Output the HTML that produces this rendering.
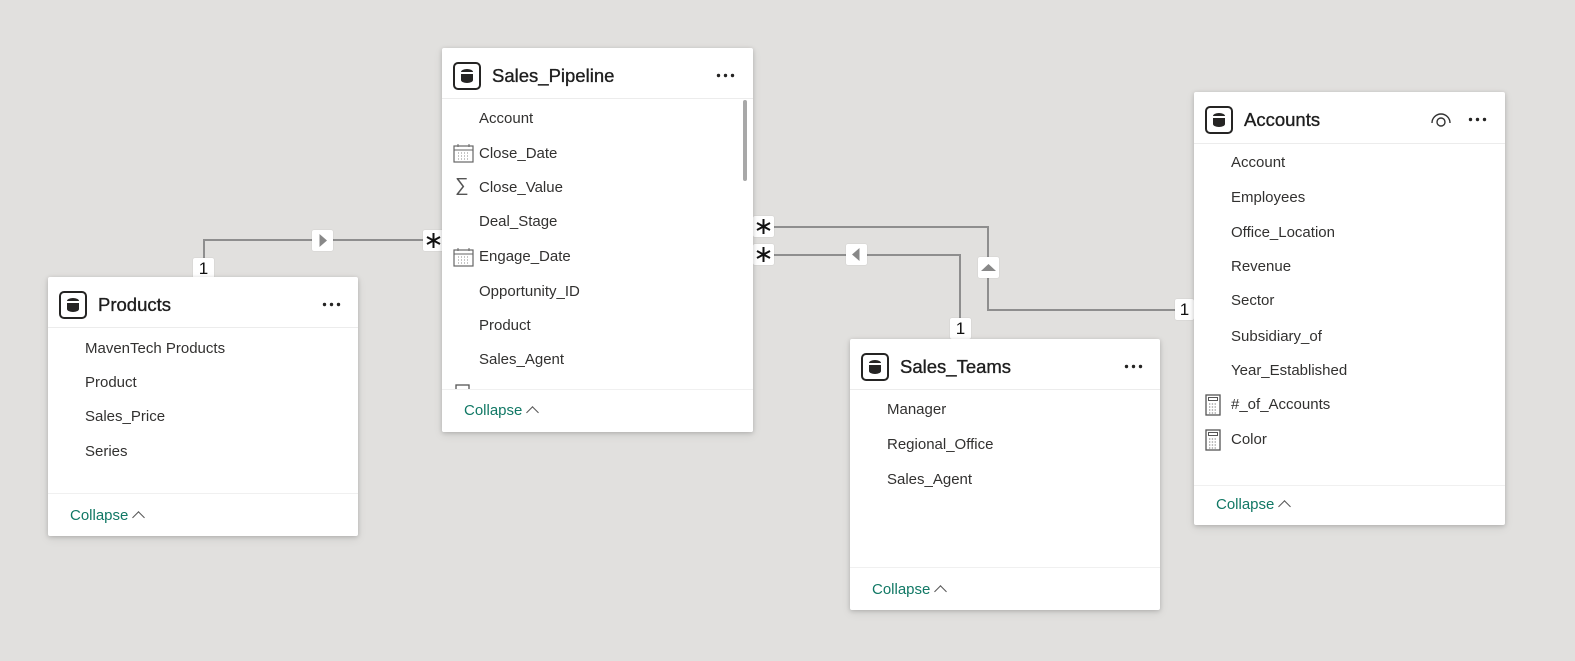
<!DOCTYPE html>
<html><head><meta charset="utf-8"><style>
*{margin:0;padding:0;box-sizing:border-box}
body{width:1575px;height:661px;background:#e1e0de;position:relative;overflow:hidden;font-family:"Segoe UI","Liberation Sans","DejaVu Sans",sans-serif;color:#252423}
.card{position:absolute;background:#fff;border-radius:2px;box-shadow:0 1px 4px rgba(0,0,0,.18),0 3px 10px rgba(0,0,0,.08)}
.hdr{position:absolute;left:0;right:0;top:0;border-bottom:1px solid #ececec}
.ti{position:absolute;left:11px;top:14px;width:28px;height:28px;border:2px solid #252423;border-radius:5px}
.ti:before{content:"";position:absolute;left:6px;top:5px;width:12px;height:14px;background:#252423;border-radius:6px/3px}
.ti:after{content:"";position:absolute;left:6px;top:8px;width:12px;height:1.5px;background:#fff}
.tt{position:absolute;left:50px;top:15px;font-size:18.5px;font-weight:normal;line-height:26px;color:#1e1e1e;-webkit-text-stroke:0.35px #1e1e1e}
.dots{position:absolute;top:25px}
.it{position:absolute;left:37px;font-size:15px;line-height:20px;color:#323130}
.ft{position:absolute;left:0;right:0;border-top:1px solid #f0f0f0}
.col{position:absolute;left:22px;font-size:15px;line-height:20px;color:#117865}
.col span{display:inline-block;width:9px;height:9px;border-left:1.3px solid #555;border-top:1.3px solid #555;transform:rotate(45deg);margin-left:6px;position:relative;top:2px}
.ic{position:absolute;left:11px}
.ln{position:absolute;background:#8e8e8e}
.lb{position:absolute;background:#fff;width:21px;height:21px;border-radius:2px;font-size:17px;line-height:21px;text-align:center;color:#111;box-shadow:0 0 1px rgba(0,0,0,.2)}
</style></head><body>

<div class="ln" style="left:203px;top:239px;width:2px;height:22px"></div>
<div class="ln" style="left:203px;top:239px;width:230px;height:2px"></div>
<div class="ln" style="left:770px;top:226px;width:219px;height:2px"></div>
<div class="ln" style="left:987px;top:226px;width:2px;height:85px"></div>
<div class="ln" style="left:987px;top:309px;width:198px;height:2px"></div>
<div class="ln" style="left:770px;top:254px;width:191px;height:2px"></div>
<div class="ln" style="left:959px;top:254px;width:2px;height:66px"></div>

<div class="lb" style="left:193px;top:258px">1</div>
<div class="lb" style="left:312px;top:230px"><svg width="21" height="21"><path d="M7.5 4 L15 10.5 L7.5 17Z" fill="#888"/></svg></div>
<div class="lb" style="left:423px;top:230px"><svg width="21" height="21"><path d="M10.5 3v15M4 7l13 7M17 7L4 14" stroke="#111" stroke-width="2"/></svg></div>
<div class="lb" style="left:753px;top:216px"><svg width="21" height="21"><path d="M10.5 3v15M4 7l13 7M17 7L4 14" stroke="#111" stroke-width="2"/></svg></div>
<div class="lb" style="left:753px;top:244px"><svg width="21" height="21"><path d="M10.5 3v15M4 7l13 7M17 7L4 14" stroke="#111" stroke-width="2"/></svg></div>
<div class="lb" style="left:846px;top:244px"><svg width="21" height="21"><path d="M13.5 4 L6 10.5 L13.5 17Z" fill="#888"/></svg></div>
<div class="lb" style="left:978px;top:257px"><svg width="21" height="21"><path d="M3 14 L10.5 7 L18 14Z" fill="#888"/></svg></div>
<div class="lb" style="left:1175px;top:299px;width:19px">1</div>
<div class="lb" style="left:950px;top:318px">1</div>

<!-- Products -->
<div class="card" style="left:48px;top:277px;width:310px;height:259px">
 <div class="hdr" style="height:51px"></div>
 <div class="ti"></div><div class="tt">Products</div>
 <svg class="dots" style="left:274px" width="20" height="5"><circle cx="2.5" cy="2.5" r="1.7" fill="#252423"/><circle cx="9.5" cy="2.5" r="1.7" fill="#252423"/><circle cx="16.5" cy="2.5" r="1.7" fill="#252423"/></svg>
 <div class="it" style="top:62px">MavenTech Products</div>
 <div class="it" style="top:96px">Product</div>
 <div class="it" style="top:130px">Sales_Price</div>
 <div class="it" style="top:165px">Series</div>
 <div class="ft" style="top:216px"></div>
 <div class="col" style="top:229px">Collapse<span></span></div>
</div>

<!-- Sales_Pipeline -->
<div class="card" style="left:442px;top:48px;width:311px;height:384px;overflow:hidden">
 <div class="hdr" style="height:51px"></div>
 <div class="ti"></div><div class="tt">Sales_Pipeline</div>
 <svg class="dots" style="left:274px" width="20" height="5"><circle cx="2.5" cy="2.5" r="1.7" fill="#252423"/><circle cx="9.5" cy="2.5" r="1.7" fill="#252423"/><circle cx="16.5" cy="2.5" r="1.7" fill="#252423"/></svg>
 <div style="position:absolute;left:301px;top:52px;width:4px;height:81px;background:#a8a8a8;border-radius:2px"></div>
 <div class="it" style="top:61px">Account</div>
 <svg class="ic" style="top:95px" width="21" height="20"><rect x="1" y="3" width="19" height="16" fill="none" stroke="#666" stroke-width="1.2"/><line x1="1" y1="7" x2="20" y2="7" stroke="#666"/><line x1="5" y1="1" x2="5" y2="4" stroke="#666"/><line x1="16" y1="1" x2="16" y2="4" stroke="#666"/><path d="M5 10h11M5 13h11M5 16h11" stroke="#888" stroke-dasharray="1 2"/></svg>
 <div class="it" style="top:96px">Close_Date</div>
 <div style="position:absolute;left:13px;top:127px;font-size:19px;color:#555">∑</div>
 <div class="it" style="top:130px">Close_Value</div>
 <div class="it" style="top:164px">Deal_Stage</div>
 <svg class="ic" style="top:199px" width="21" height="20"><rect x="1" y="3" width="19" height="16" fill="none" stroke="#666" stroke-width="1.2"/><line x1="1" y1="7" x2="20" y2="7" stroke="#666"/><line x1="5" y1="1" x2="5" y2="4" stroke="#666"/><line x1="16" y1="1" x2="16" y2="4" stroke="#666"/><path d="M5 10h11M5 13h11M5 16h11" stroke="#888" stroke-dasharray="1 2"/></svg>
 <div class="it" style="top:199px">Engage_Date</div>
 <div class="it" style="top:234px">Opportunity_ID</div>
 <div class="it" style="top:268px">Product</div>
 <div class="it" style="top:302px">Sales_Agent</div>
 <svg class="ic" style="top:336px;left:13px" width="16" height="8"><rect x="1" y="1" width="13" height="10" fill="none" stroke="#555" stroke-width="1.3"/></svg>
 <div class="ft" style="top:341px;height:50px;background:#fff"></div>
 <div class="col" style="top:353px">Collapse<span></span></div>
</div>

<!-- Sales_Teams -->
<div class="card" style="left:850px;top:339px;width:310px;height:271px">
 <div class="hdr" style="height:51px"></div>
 <div class="ti"></div><div class="tt">Sales_Teams</div>
 <svg class="dots" style="left:274px" width="20" height="5"><circle cx="2.5" cy="2.5" r="1.7" fill="#252423"/><circle cx="9.5" cy="2.5" r="1.7" fill="#252423"/><circle cx="16.5" cy="2.5" r="1.7" fill="#252423"/></svg>
 <div class="it" style="top:61px">Manager</div>
 <div class="it" style="top:96px">Regional_Office</div>
 <div class="it" style="top:131px">Sales_Agent</div>
 <div class="ft" style="top:228px"></div>
 <div class="col" style="top:241px">Collapse<span></span></div>
</div>

<!-- Accounts -->
<div class="card" style="left:1194px;top:92px;width:311px;height:433px">
 <div class="hdr" style="height:52px"></div>
 <div class="ti"></div><div class="tt">Accounts</div>
 <svg style="position:absolute;left:236px;top:19px" width="22" height="16"><path d="M2 12 A9 9 0 0 1 20 12" fill="none" stroke="#333" stroke-width="1.4"/><circle cx="11" cy="11" r="4" fill="none" stroke="#333" stroke-width="1.4"/></svg>
 <svg class="dots" style="left:274px" width="20" height="5"><circle cx="2.5" cy="2.5" r="1.7" fill="#252423"/><circle cx="9.5" cy="2.5" r="1.7" fill="#252423"/><circle cx="16.5" cy="2.5" r="1.7" fill="#252423"/></svg>
 <div class="it" style="top:61px">Account</div>
 <div class="it" style="top:96px">Employees</div>
 <div class="it" style="top:131px">Office_Location</div>
 <div class="it" style="top:165px">Revenue</div>
 <div class="it" style="top:199px">Sector</div>
 <div class="it" style="top:235px">Subsidiary_of</div>
 <div class="it" style="top:269px">Year_Established</div>
 <svg class="ic" style="top:302px" width="16" height="22"><rect x="1" y="1" width="14" height="20" fill="none" stroke="#555" stroke-width="1.3"/><rect x="3.5" y="3.5" width="9" height="3" fill="none" stroke="#555"/><path d="M4 10h8M4 13h8M4 16h8M4 19h8" stroke="#777" stroke-dasharray="1.3 1.5"/></svg>
 <div class="it" style="top:303px">#_of_Accounts</div>
 <svg class="ic" style="top:337px" width="16" height="22"><rect x="1" y="1" width="14" height="20" fill="none" stroke="#555" stroke-width="1.3"/><rect x="3.5" y="3.5" width="9" height="3" fill="none" stroke="#555"/><path d="M4 10h8M4 13h8M4 16h8M4 19h8" stroke="#777" stroke-dasharray="1.3 1.5"/></svg>
 <div class="it" style="top:338px">Color</div>
 <div class="ft" style="top:393px"></div>
 <div class="col" style="top:403px">Collapse<span></span></div>
</div>
</body></html>
